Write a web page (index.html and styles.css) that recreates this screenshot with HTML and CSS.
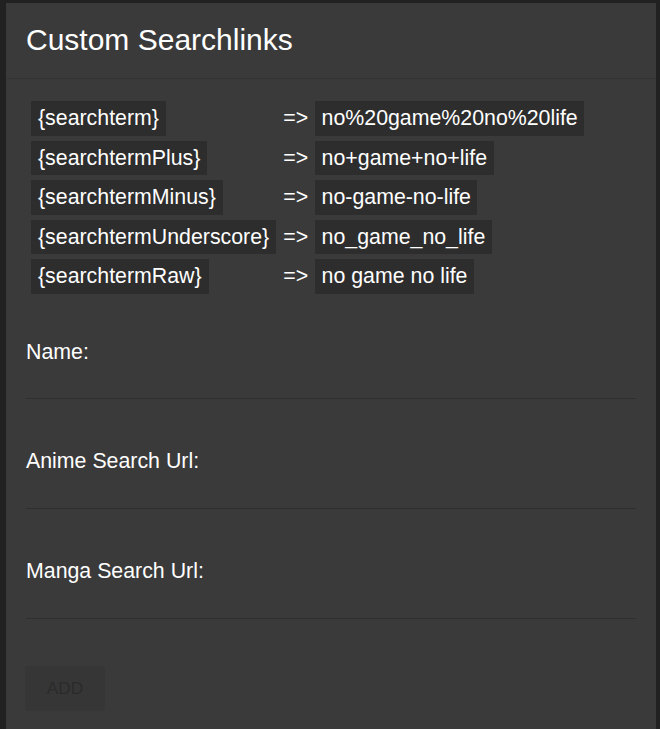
FILE: index.html
```html
<!DOCTYPE html>
<html lang="en">
<head>
<meta charset="utf-8">
<title>Custom Searchlinks</title>
<link rel="stylesheet" href="styles.css">
</head>
<body>
<div class="card">
  <div class="card-header">
    <h1 class="title">Custom Searchlinks</h1>
  </div>
  <div class="card-body">
    <div class="legend">
      <div class="key">{searchterm}</div><div class="arrow">=&gt;</div><div class="val">no%20game%20no%20life</div>
      <div class="key">{searchtermPlus}</div><div class="arrow">=&gt;</div><div class="val">no+game+no+life</div>
      <div class="key">{searchtermMinus}</div><div class="arrow">=&gt;</div><div class="val">no-game-no-life</div>
      <div class="key">{searchtermUnderscore}</div><div class="arrow">=&gt;</div><div class="val">no_game_no_life</div>
      <div class="key">{searchtermRaw}</div><div class="arrow">=&gt;</div><div class="val">no game no life</div>
    </div>
    <div class="form">
      <div class="field first">
        <label class="label">Name:</label>
        <input class="input" type="text">
      </div>
      <div class="field">
        <label class="label">Anime Search Url:</label>
        <input class="input" type="text">
      </div>
      <div class="field">
        <label class="label">Manga Search Url:</label>
        <input class="input" type="text">
      </div>
      <button class="btn" disabled>ADD</button>
    </div>
  </div>
</div>
</body>
</html>
```

FILE: styles.css
```css
html, body {
  margin: 0;
  background: #212121;
}
body {
  padding: 3px 4px 0 6px;
  font-family: "Liberation Sans", Arial, sans-serif;
  color: #ffffff;
}
.card {
  background: #3a3a3a;
  min-height: 726px;
}
.card-header {
  padding: 20px;
  border-bottom: 1px solid #333333;
}
.title {
  margin: 0;
  font-size: 30px;
  font-weight: normal;
  line-height: 34.5px;
}
.card-body {
  padding: 22.5px 20px 20px 20px;
}
.legend {
  display: grid;
  grid-template-columns: auto auto auto;
  justify-content: start;
  column-gap: 7px;
  row-gap: 5px;
  margin-left: 5px;
  font-size: 21.33px;
  line-height: 24.5px;
}
.key, .val {
  justify-self: start;
  background: #2d2d2d;
  padding: 5px 7px;
}
.val {
  padding: 5px 6.5px;
}
.arrow {
  padding: 5px 0;
}
.form {
  display: flex;
  flex-direction: column;
  align-items: stretch;
}
.field {
  margin-top: 50.2px;
  display: flex;
  flex-direction: column;
}
.field.first {
  margin-top: 46.2px;
}
.label {
  font-size: 21.33px;
  line-height: 24.5px;
}
.input {
  box-sizing: border-box;
  height: 35px;
  margin: 0;
  padding: 0;
  border: none;
  border-bottom: 1px solid #2f2f2f;
  background: transparent;
  color: #ffffff;
  font: inherit;
  outline: none;
}
.btn {
  align-self: flex-start;
  margin-top: 47.4px;
  margin-left: -1px;
  width: 80px;
  height: 45px;
  border: none;
  border-radius: 3px;
  background: #363636;
  color: #2b2b2b;
  font-family: "Liberation Sans", Arial, sans-serif;
  font-size: 17.3px;
  padding: 0;
}
```
